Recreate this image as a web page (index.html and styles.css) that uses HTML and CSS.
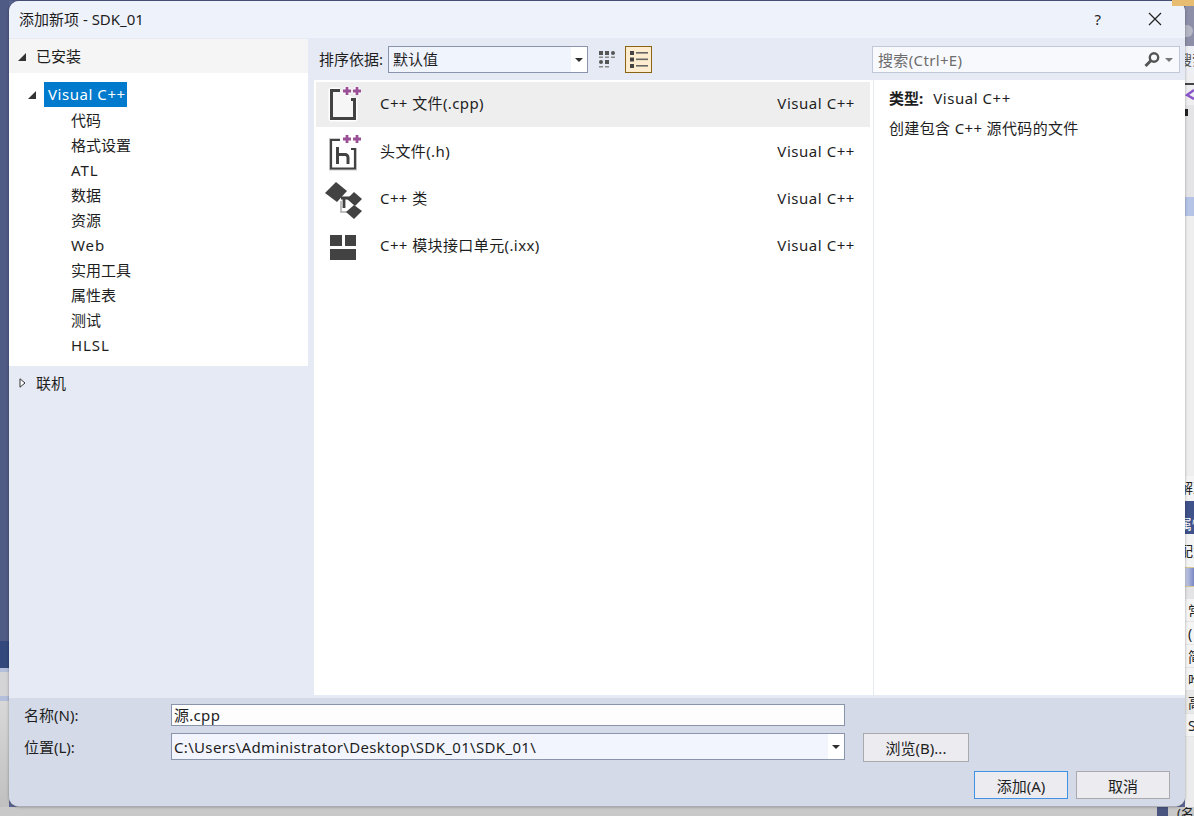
FILE: index.html
```html
<!DOCTYPE html>
<html lang="zh-CN">
<head>
<meta charset="utf-8">
<title>添加新项 - SDK_01</title>
<link rel="stylesheet" href="styles.css">
</head>
<body>
<div class="desk">
  <div class="edge-top"><span class="orange"></span></div>
  <div class="strip-left">
    <div class="sl-a"></div><div class="sl-b"></div><div class="sl-band"></div><div class="sl-c"></div><div class="sl-band wide"></div><div class="sl-e"></div>
  </div>
  <main class="dialog">
    <header class="titlebar">
      <span class="title">添加新项 - SDK_01</span>
      <span class="help">?</span>
      <svg class="close" width="14" height="14" viewBox="0 0 14 14"><path d="M1 1l12 12M13 1L1 13" stroke="#222" stroke-width="1.2" fill="none"/></svg>
    </header>
    <div class="body">
      <aside class="side">
        <div class="tree">
          <div class="tree-head"><svg class="tri" width="8" height="8" viewBox="0 0 8 8"><path d="M8 0v8H0z" fill="#333"/></svg><span>已安装</span></div>
          <div class="tree-body">
            <div class="vc-row"><svg class="tri" width="8" height="8" viewBox="0 0 8 8"><path d="M8 0v8H0z" fill="#333"/></svg><span class="vc">Visual C++</span></div>
            <div class="leaf">代码</div>
            <div class="leaf">格式设置</div>
            <div class="leaf lat">ATL</div>
            <div class="leaf">数据</div>
            <div class="leaf">资源</div>
            <div class="leaf lat">Web</div>
            <div class="leaf">实用工具</div>
            <div class="leaf">属性表</div>
            <div class="leaf">测试</div>
            <div class="leaf lat">HLSL</div>
          </div>
        </div>
        <div class="online"><svg width="7" height="10" viewBox="0 0 7 10"><path d="M1 .8L6 5 1 9.2z" fill="#fff" stroke="#333"/></svg><span>联机</span></div>
      </aside>
      <section class="center">
        <div class="toolbar">
          <span class="sort-label">排序依据:</span>
          <div class="select"><span class="sel-text">默认值</span><span class="sel-btn"><i class="caret"></i></span></div>
          <svg class="grid-ic" width="18" height="18" viewBox="0 0 18 18" fill="#555">
            <rect x="1" y="0" width="4" height="4"/><rect x="7" y="0" width="4" height="4"/><circle cx="15" cy="2" r="2"/>
            <rect x="1" y="5.5" width="4" height="1.5" fill="#888"/><rect x="7" y="5.5" width="4" height="1.5" fill="#888"/><rect x="13" y="5.5" width="4" height="1.5" fill="#888"/>
            <circle cx="3" cy="11" r="2"/><rect x="7" y="9" width="4" height="4"/>
            <rect x="1" y="15" width="4" height="1.5" fill="#888"/><rect x="7" y="15" width="4" height="1.5" fill="#888"/>
          </svg>
          <div class="list-btn">
            <svg width="19" height="19" viewBox="0 0 19 19">
              <g fill="#444"><rect x="1" y="1" width="4" height="4"/><rect x="1" y="7.5" width="4" height="4"/><rect x="1" y="14" width="4" height="4"/></g>
              <g fill="#666"><rect x="7" y="2" width="12" height="1.6"/><rect x="7" y="8.5" width="12" height="1.6"/><rect x="7" y="15" width="12" height="1.6"/></g>
            </svg>
          </div>
          <div class="search">
            <span class="search-text">搜索(Ctrl+E)</span>
            <svg width="18" height="18" viewBox="0 0 18 18"><circle cx="11" cy="6.5" r="4.2" fill="none" stroke="#555" stroke-width="2.4"/><path d="M8 9.5L2.5 15" stroke="#555" stroke-width="3"/></svg>
            <i class="caret gray"></i>
          </div>
        </div>
        <div class="content">
          <div class="list">
            <div class="row selected">
              <svg class="ic" width="42" height="38" viewBox="0 0 42 38">
                <path d="M18 4.500H9.500V32.500H32.500V12" fill="#fff" stroke="#fff" stroke-width="6" stroke-linejoin="round"/>
                <path d="M18 4.500H9.500V32.500H32.500V13.500H29" fill="#f6f6f6" stroke="#424242" stroke-width="3"/>
                <path d="M21 5h8M25 1v8M31 5h8M35 1v8" stroke="#fff" stroke-width="5" fill="none"/>
                <path d="M21 5h8M25 1v8M31 5h8M35 1v8" stroke="#9b4f96" stroke-width="2.800" fill="none"/>
              </svg>
              <span class="name">C++ 文件(.cpp)</span><span class="kind">Visual C++</span>
            </div>
            <div class="row">
              <svg class="ic" width="42" height="38" viewBox="0 0 42 38">
                <path d="M18 6H9V34.500H33V14" fill="#fff" stroke="#ccc" stroke-width="4"/>
                <path d="M18 6H9V34.500H33V15H29" fill="#fff" stroke="#424242" stroke-width="2.200"/>
                <path d="M15.500 13v17M15.500 20.500h7.500a3 3 0 0 1 3 3v6.500" fill="none" stroke="#424242" stroke-width="3"/>
                <path d="M21 5h8M25 1v8M31 5h8M35 1v8" stroke="#fff" stroke-width="5" fill="none"/>
                <path d="M21 5h8M25 1v8M31 5h8M35 1v8" stroke="#9b4f96" stroke-width="2.800" fill="none"/>
              </svg>
              <span class="name">头文件(.h)</span><span class="kind">Visual C++</span>
            </div>
            <div class="row">
              <svg class="ic" width="42" height="38" viewBox="0 0 42 38">
                <path d="M19 20v11h6" fill="none" stroke="#aaa" stroke-width="1.500"/>
                <path d="M3 12L14 1 25 10 15 21z" fill="#424242"/>
                <path d="M19 17h13M22 17v10" fill="none" stroke="#424242" stroke-width="2.800"/>
                <path d="M25 18L32 11 40 18 33 25z" fill="#424242"/>
                <path d="M24 31L32 24 40 30 32 38z" fill="#424242"/>
              </svg>
              <span class="name">C++ 类</span><span class="kind">Visual C++</span>
            </div>
            <div class="row">
              <svg class="ic" width="42" height="38" viewBox="0 0 42 38" fill="#424242">
                <rect x="8" y="7" width="12" height="11"/><rect x="23" y="7" width="11" height="11"/><rect x="8" y="21" width="26" height="11"/>
              </svg>
              <span class="name">C++ 模块接口单元(.ixx)</span><span class="kind">Visual C++</span>
            </div>
          </div>
          <div class="detail">
            <p class="d-type"><b>类型:</b><span>Visual C++</span></p>
            <p class="d-desc">创建包含 C++ 源代码的文件</p>
          </div>
        </div>
      </section>
    </div>
    <footer class="footer">
      <div class="f-row r1">
        <label>名称(N):</label>
        <div class="input">源.cpp</div>
      </div>
      <div class="f-row r2">
        <label>位置(L):</label>
        <div class="input path"><span class="path-text">C:\Users\Administrator\Desktop\SDK_01\SDK_01\</span><span class="sel-btn"><i class="caret"></i></span></div>
        <button class="btn browse">浏览(B)...</button>
      </div>
      <div class="f-actions">
        <button class="btn primary">添加(A)</button>
        <button class="btn">取消</button>
      </div>
    </footer>
  </main>
  <div class="strip-right">
    <div class="sr-top"><i class="sr-dot"></i></div>
    <div class="sr-search"><span>搜索</span></div>
    <div class="sr-icon">
      <svg width="9" height="26" viewBox="0 0 9 26"><path d="M0 9h9v2H0z" fill="#444"/><path d="M9 16L2 21l7 4" stroke="#8a55c8" stroke-width="2.500" fill="none"/></svg>
    </div>
    <div class="sr-mark"><i></i></div>
    <div class="sr-sel"></div>
    <div class="sr-white"></div>
    <div class="sr-text t1"><span>解决</span></div>
    <div class="sr-head"><span>属性</span></div>
    <div class="sr-text t2"><span>配置</span></div>
    <div class="sr-tools"></div>
    <div class="sr-line"><b>常</b></div>
    <div class="sr-line"><b>(</b></div>
    <div class="sr-line"><b>简</b></div>
    <div class="sr-line"><b>唯</b></div>
    <div class="sr-line alt"><b>高</b></div>
    <div class="sr-line"><b>S</b></div>
    <div class="sr-rest"></div>
  </div>
  <div class="edge-bottom"><span class="sq"></span><span class="bt">(名</span></div>
</div>
</body>
</html>
```
FILE: styles.css
```css
* { box-sizing: border-box; }
html, body { margin: 0; padding: 0; }
body {
  width: 1194px; height: 816px; overflow: hidden;
  font-family: "Noto Sans", "Noto Sans CJK SC", sans-serif;
  font-size: 15px; color: #1e1e1e; background: #5a6591;
}
.desk {
  display: grid; width: 1194px; height: 816px;
  grid-template-columns: 9px 1176px 9px;
  grid-template-rows: 1px 806px 9px;
  background: #5a6591;
}
.edge-top { grid-column: 1 / 4; background: #4f5a85; position: relative; }
.orange { position: absolute; left: 1172px; top: 0; width: 22px; height: 6px; background: #e8bd72; z-index: 2; }
.strip-left { display: flex; flex-direction: column; overflow: hidden; }
.sl-a { height: 640px; background: #4f5a85; }
.sl-b { height: 27px; background: #33487c; }
.sl-band { height: 4px; background: #b4bfdb; }
.sl-band.wide { height: 5px; }
.sl-c { height: 24px; background: #d4d4d6; }
.sl-e { flex: 1; background: linear-gradient(#d8d8d8, #c0c0c0); }

.dialog {
  display: flex; flex-direction: column; overflow: hidden;
  background: #e6eaf5; border-radius: 10px;
  border-bottom: 1px solid #a8abb4;
  box-shadow: 0 0 3px rgba(0,0,0,.35);
  position: relative; z-index: 1;
}
.titlebar {
  height: 37px; flex: none; display: flex; align-items: center;
  background: #eef2fb; padding: 0 23px 2px 10px;
}
.title { flex: 1; }
.help { font-size: 15px; margin-right: 47px; }
.body { flex: 1; display: flex; min-height: 0; padding-top: 1px; }
.side { width: 299px; flex: none; margin-right: 6px; }
.tree { background: #fff; }
.tree-head { height: 34px; background: #f5f5f5; display: flex; align-items: center; padding-left: 9px; }
.tree-head span { margin-left: 10px; padding-bottom: 2px; }
.tree-head .tri { margin-top: 1px; }
.tree-body { padding: 9px 0 8px; height: 293px; }
.vc-row { height: 25px; display: flex; align-items: center; padding-left: 19px; }
.vc { margin-left: 8px; background: #007acc; color: #fff; height: 25px; line-height: 25px; padding: 0 0 0 4px; width: 83px; letter-spacing: .55px; white-space: nowrap; }
.leaf { height: 25px; line-height: 27px; padding-left: 62px; }
.leaf.lat { letter-spacing: .9px; }
.online { display: flex; align-items: center; height: 33px; padding-left: 10px; }
.online span { margin-left: 10px; }

.center { flex: 1; display: flex; flex-direction: column; min-width: 0; }
.toolbar { height: 41px; flex: none; display: flex; align-items: center; padding: 0 5px; }
.sort-label { width: 69px; white-space: nowrap; padding-bottom: 2px; }
.select { width: 200px; height: 27px; border: 1px solid #8a94ad; background: #f0f4fd; display: flex; align-items: center; }
.sel-text { flex: 1; padding: 0 0 2px 4px; }
.sel-btn { width: 16px; align-self: stretch; background: #fff; display: flex; align-items: center; justify-content: center; }
.caret { display: block; width: 0; height: 0; border-left: 4px solid transparent; border-right: 4px solid transparent; border-top: 4px solid #2e2e2e; }
.caret.gray { border-top-color: #777; margin-left: 4px; }
.grid-ic { margin-left: 10px; }
.list-btn { width: 27px; height: 27px; margin-left: 9px; border: 1px solid #8a6414; background: #fdeccd; display: flex; align-items: center; justify-content: center; }
.search { margin-left: auto; width: 308px; height: 27px; border: 1px solid #c1c8da; background: #f8f9fc; display: flex; align-items: center; padding: 0 6px 0 5px; color: #6d6d6d; }
.search-text { flex: 1; letter-spacing: .35px; padding-bottom: 1px; }

.content { flex: 1; display: flex; min-height: 0; background: #fff; }
.list { width: 559px; flex: none; padding: 2px 3px 0 2px; }
.row { height: 47px; display: flex; align-items: center; padding: 0 15px 0 6px; }
.row.selected { height: 45px; background: #eeeeee; margin-bottom: 2px; }
.row .ic { flex: none; margin-right: 16px; }
.name { flex: 1; letter-spacing: .4px; line-height: 20px; padding-bottom: 4px; }
.kind { letter-spacing: .55px; line-height: 20px; padding-bottom: 4px; }
.detail { flex: 1; border-left: 1px solid #e6eaf5; padding: 8px 0 0 15px; }
.detail p { margin: 0; height: 30px; line-height: 20px; }
.d-type b { font-weight: 700; }
.d-type span { margin-left: 10px; letter-spacing: .55px; }
.d-desc { letter-spacing: .35px; }

.footer {
  height: 108px; flex: none; margin-top: 3px; background: #d5dae8;
  padding: 6px 15px 0 15px; display: flex; flex-direction: column;
}
.f-row { display: flex; align-items: flex-start; }
.f-row label { width: 147px; flex: none; }
.r1 { height: 29px; }
.r1 label { line-height: 22px; }
.r2 { height: 38px; }
.r2 label { line-height: 28px; }
.input { width: 674px; height: 22px; background: #fdfdfe; border: 1px solid #8a94ad; padding-left: 2px; line-height: 20px; letter-spacing: .3px; }
.input.path { height: 27px; display: flex; align-items: center; background: #f2f5fd; padding-right: 0; }
.path-text { flex: 1; letter-spacing: .33px; }
.btn { font: inherit; color: #1e1e1e; background: #ecebf0; border: 1px solid #a9a9ae; height: 28px; width: 94px; padding: 1px 0 0; margin: 0; }
.browse { width: 106px; height: 29px; margin-left: 18px; padding: 0 0 1px; }
.f-actions { display: flex; justify-content: flex-end; gap: 8px; }
.primary { border-color: #3f92e4; }

.strip-right { display: flex; flex-direction: column; overflow: hidden; background: #e4e4e6; }
.strip-right span, .strip-right b { display: block; white-space: nowrap; font-weight: 400; }
.sr-top { height: 45px; background: #8d8fa8; padding-top: 24px; }
.sr-dot { display: block; width: 8px; height: 12px; border-radius: 0 6px 6px 0; background: #b5b6c4; }
.sr-search { height: 28px; background: #eef0f6; line-height: 28px; font-size: 14px; color: #555; }
.sr-search span { margin-left: -7px; }
.sr-icon { height: 31px; background: #efeff2; }
.sr-icon svg { display: block; }
.sr-mark { height: 92px; background: #e4e4e6; padding-top: 4px; }
.sr-mark i { display: block; width: 3px; height: 7px; background: #222; }
.sr-sel { height: 19px; background: #b4c3e6; }
.sr-white { height: 260px; background: #eeeeee; }
.sr-text { line-height: 24px; font-size: 14px; color: #222; background: #f4f4f4; }
.t1 { height: 25px; }
.t1 span { margin-left: -6px; }
.t2 { height: 33px; line-height: 33px; }
.t2 span { margin-left: -6px; }
.sr-head { height: 33px; background: #3f5289; color: #fff; line-height: 46px; font-size: 14px; }
.sr-head span { margin-left: -7px; }
.sr-tools { height: 20px; flex: none; margin-bottom: 12px; background: linear-gradient(90deg, #cdd3ea, #7a86c2); border-top: 1px solid #d8c896; border-bottom: 1px solid #d8c896; }
.sr-line { height: 23px; line-height: 23px; font-size: 14px; color: #222; background: #f4f4f4; border-bottom: 1px solid #e4e4e4; }
.sr-line.alt { background: #e8e8e8; }
.sr-line b { margin-left: 3px; }
.sr-rest { flex: 1; background: #ececec; }
.edge-bottom { grid-column: 1 / 4; background: #c9c9c9; display: flex; align-items: flex-start; overflow: hidden; padding-left: 1157px; }
.sq { width: 13px; height: 9px; background: #4a5580; }
.bt { font-size: 13px; line-height: 13px; margin-left: 9px; }
```
